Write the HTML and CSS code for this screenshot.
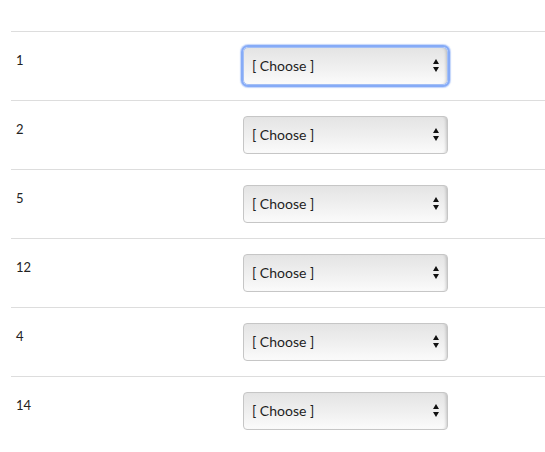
FILE: index.html
```html
<!DOCTYPE html>
<html>
    <head>
        <title>Ranking</title>
        <link rel="stylesheet" href="styles.css">
    </head>
    <body>
        <div class="ranking">
            <div class="row">
                <div class="num">1</div>
                <div class="pick"><div class="select focused">[ Choose ]<span class="arrows"></span></div></div>
            </div>
            <div class="row">
                <div class="num">2</div>
                <div class="pick"><div class="select">[ Choose ]<span class="arrows"></span></div></div>
            </div>
            <div class="row">
                <div class="num">5</div>
                <div class="pick"><div class="select">[ Choose ]<span class="arrows"></span></div></div>
            </div>
            <div class="row">
                <div class="num">12</div>
                <div class="pick"><div class="select">[ Choose ]<span class="arrows"></span></div></div>
            </div>
            <div class="row">
                <div class="num">4</div>
                <div class="pick"><div class="select">[ Choose ]<span class="arrows"></span></div></div>
            </div>
            <div class="row">
                <div class="num">14</div>
                <div class="pick"><div class="select">[ Choose ]<span class="arrows"></span></div></div>
            </div>
        </div>
    </body>
</html>
```

FILE: styles.css
```css
body {
    margin: 0px;
    background: #ffffff;
    font-family: Lato, "Liberation Sans", sans-serif;
    font-size: 13px;
    color: #222222;
}
.ranking {
    padding-top: 31px;
    margin-left: 11px;
}
.row {
    display: grid;
    grid-template-columns: 232px 1fr;
    border-top: 1px solid #dddddd;
    padding: 15px 0px;
}
.num {
    padding-left: 5px;
    padding-top: 4px;
    line-height: 18px;
}
.select {
    position: relative;
    box-sizing: border-box;
    width: 205px;
    height: 38px;
    border: 1px solid #c6c6c6;
    border-radius: 4px;
    background: linear-gradient(#e4e4e4, #f0f0f0 55%, #fbfbfb);
    box-shadow: inset -3px 0px 3px -2px rgba(0, 0, 0, 0.18);
    padding-left: 8px;
    font-size: 14px;
    line-height: 35px;
    color: #1e1e1e;
}
.focused {
    border-radius: 5px;
    border-color: #a3bff5;
    box-shadow: 0px 0px 0px 2px #86abf7,
                0px 0px 1px 3px rgba(134, 171, 247, 0.5),
                inset -3px 0px 3px -2px rgba(0, 0, 0, 0.18);
}
.arrows {
    position: absolute;
    right: 8px;
    top: 11px;
    width: 6px;
    height: 14px;
}
.arrows::before,
.arrows::after {
    content: "";
    position: absolute;
    left: 0px;
    border-left: 3px solid transparent;
    border-right: 3px solid transparent;
}
.arrows::before {
    top: 0px;
    border-bottom: 5px solid #111111;
}
.arrows::after {
    top: 8px;
    border-top: 5px solid #111111;
}
```
